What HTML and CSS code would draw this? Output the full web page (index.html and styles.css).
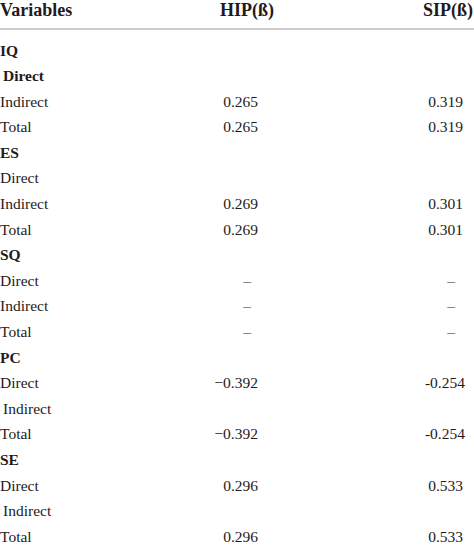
FILE: index.html
```html
<!DOCTYPE html>
<html>
<head>
<meta charset="utf-8">
<link rel="stylesheet" href="styles.css">
</head>
<body>
<div class="table">
  <div class="head">
    <div class="h-var">Variables</div>
    <div class="h-hip">HIP(ß)</div>
    <div class="h-sip">SIP(ß)</div>
  </div>
  <div class="body">
    <div class="lbl b">IQ</div><div class="hip"></div><div class="sip"></div>
    <div class="lbl b ind">Direct</div><div class="hip"></div><div class="sip"></div>
    <div class="lbl">Indirect</div><div class="hip">0.265</div><div class="sip">0.319</div>
    <div class="lbl">Total</div><div class="hip">0.265</div><div class="sip">0.319</div>

    <div class="lbl b">ES</div><div class="hip"></div><div class="sip"></div>
    <div class="lbl">Direct</div><div class="hip"></div><div class="sip"></div>
    <div class="lbl">Indirect</div><div class="hip">0.269</div><div class="sip">0.301</div>
    <div class="lbl">Total</div><div class="hip">0.269</div><div class="sip">0.301</div>

    <div class="lbl b">SQ</div><div class="hip"></div><div class="sip"></div>
    <div class="lbl">Direct</div><div class="hip dash">–</div><div class="sip dash">–</div>
    <div class="lbl">Indirect</div><div class="hip dash">–</div><div class="sip dash">–</div>
    <div class="lbl">Total</div><div class="hip dash">–</div><div class="sip dash">–</div>

    <div class="lbl b">PC</div><div class="hip"></div><div class="sip"></div>
    <div class="lbl">Direct</div><div class="hip">−0.392</div><div class="sip neg">-0.254</div>
    <div class="lbl ind">Indirect</div><div class="hip"></div><div class="sip"></div>
    <div class="lbl">Total</div><div class="hip">−0.392</div><div class="sip neg">-0.254</div>

    <div class="lbl b">SE</div><div class="hip"></div><div class="sip"></div>
    <div class="lbl">Direct</div><div class="hip">0.296</div><div class="sip">0.533</div>
    <div class="lbl ind">Indirect</div><div class="hip"></div><div class="sip"></div>
    <div class="lbl">Total</div><div class="hip">0.296</div><div class="sip">0.533</div>
  </div>
</div>
</body>
</html>
```

FILE: styles.css
```css
html, body {
  margin: 0;
  padding: 0;
  background: #ffffff;
}
body {
  font-family: "Liberation Serif", "Times New Roman", serif;
  color: #1f1b1c;
  width: 474px;
  height: 546px;
  overflow: hidden;
}
.head {
  display: flex;
  font-weight: bold;
  font-size: 18px;
  line-height: 20px;
  padding-bottom: 8px;
  border-bottom: 2px solid #cdcdcd;
  white-space: nowrap;
}
.h-var {
  width: 220px;
}
.h-hip {
  width: 203px;
}
.h-sip {
  flex: 1;
}
.body {
  display: grid;
  grid-template-columns: 200px 58px 1fr;
  grid-auto-rows: 25.6px;
  padding-top: 7.5px;
  font-size: 15.5px;
  line-height: 25.6px;
  white-space: nowrap;
}
.lbl.b {
  font-weight: bold;
}
.lbl.ind {
  padding-left: 3px;
}
.hip {
  text-align: right;
}
.sip {
  text-align: right;
  padding-right: 11px;
}
.sip.neg {
  padding-right: 9px;
}
.hip.dash {
  padding-right: 7px;
}
.sip.dash {
  padding-right: 19px;
}
```
